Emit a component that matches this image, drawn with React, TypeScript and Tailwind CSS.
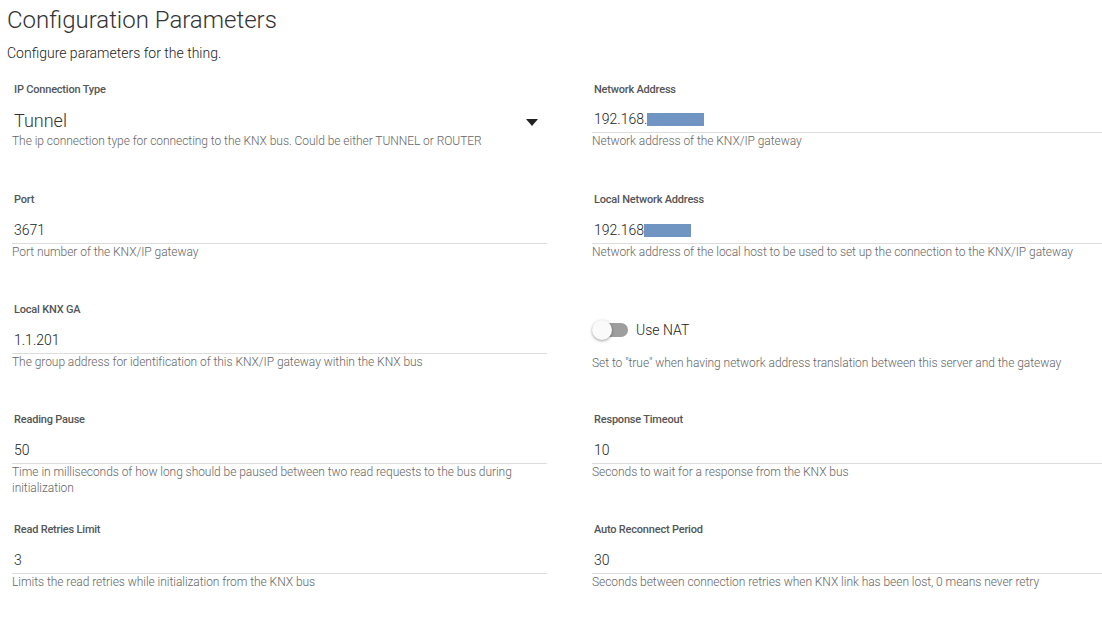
import React from "react";

const font = { fontFamily: "Roboto, 'Noto Sans', sans-serif" };

function Label({ children }: { children: React.ReactNode }) {
  return (
    <div className="pl-[2px] text-[11px] leading-[16px] font-medium tracking-[-0.2px] text-[#555]">{children}</div>
  );
}

function Desc({ children }: { children: React.ReactNode }) {
  return (
    <div className="text-[12px] leading-[16px] font-light tracking-[-0.05px] text-[#666]">{children}</div>
  );
}

function TextField({
  label,
  value,
  desc,
  redact,
  first,
}: {
  label: string;
  value: string;
  desc: string;
  redact?: number;
  first?: boolean;
}) {
  return (
    <div className="h-[110px]">
      <Label>{label}</Label>
      <div
        className={
          (first ? "mt-[11px] " : "mt-[12px] ") +
          "h-[24px] border-b border-[#ddd] pl-[2px] pb-[3px] text-[14px] leading-[20px] font-light text-[#222] flex items-center"
        }
      >
        <span>{value}</span>
        {redact ? <span className="inline-block h-[13px] bg-[#7195c3]" style={{ width: redact }} /> : null}
      </div>
      <Desc>{desc}</Desc>
    </div>
  );
}

export default function App() {
  return (
    <div className="w-[1102px] h-[617px] overflow-hidden bg-white" style={font}>
      <div className="pl-[7px] pt-[4px]">
        <h1 className="text-[24px] leading-[32px] font-light text-[#333]">Configuration Parameters</h1>
        <p className="mt-[8px] text-[14px] leading-[18px] font-light text-[#222]">Configure parameters for the thing.</p>
      </div>
      <div className="mt-[20px] pl-[12px] grid grid-cols-[535px_510px] gap-x-[45px]">
        <div className="h-[110px]">
          <Label>IP Connection Type</Label>
          <div className="mt-[11px] h-[24px] pl-[2px] flex items-center justify-between pr-[9px]">
            <span className="text-[18px] leading-[24px] font-light text-[#333]">Tunnel</span>
            <svg width="12" height="7" viewBox="0 0 12 7" className="mt-[3px]">
              <polygon points="0,0 12,0 6,7" fill="#222" />
            </svg>
          </div>
          <Desc>The ip connection type for connecting to the KNX bus. Could be either TUNNEL or ROUTER</Desc>
        </div>
        <TextField
          first
          label="Network Address"
          value="192.168."
          desc="Network address of the KNX/IP gateway"
          redact={57}
        />

        <TextField label="Port" value="3671" desc="Port number of the KNX/IP gateway" />
        <TextField
          label="Local Network Address"
          value="192.168"
          desc="Network address of the local host to be used to set up the connection to the KNX/IP gateway"
          redact={47}
        />

        <TextField
          label="Local KNX GA"
          value="1.1.201"
          desc="The group address for identification of this KNX/IP gateway within the KNX bus"
        />
        <div className="h-[110px]">
          <div className="mt-[18px] flex items-center h-[20px]">
            <div className="relative w-[36px] h-[20px] flex items-center">
              <div className="ml-[2px] w-[34px] h-[14px] rounded-full bg-[#9e9e9e]" />
              <div className="absolute left-0 top-0 w-[20px] h-[20px] rounded-full bg-[#fafafa] shadow-[0_1px_3px_rgba(0,0,0,0.4)]" />
            </div>
            <span className="ml-[8px] text-[14px] leading-[20px] font-light text-[#222]">Use NAT</span>
          </div>
          <div className="mt-[15px] text-[12px] leading-[16px] font-light tracking-[-0.05px] text-[#666]">
            Set to "true" when having network address translation between this server and the gateway
          </div>
        </div>

        <TextField
          label="Reading Pause"
          value="50"
          desc="Time in milliseconds of how long should be paused between two read requests to the bus during initialization"
        />
        <TextField label="Response Timeout" value="10" desc="Seconds to wait for a response from the KNX bus" />

        <TextField
          label="Read Retries Limit"
          value="3"
          desc="Limits the read retries while initialization from the KNX bus"
        />
        <TextField
          label="Auto Reconnect Period"
          value="30"
          desc="Seconds between connection retries when KNX link has been lost, 0 means never retry"
        />
      </div>
    </div>
  );
}
